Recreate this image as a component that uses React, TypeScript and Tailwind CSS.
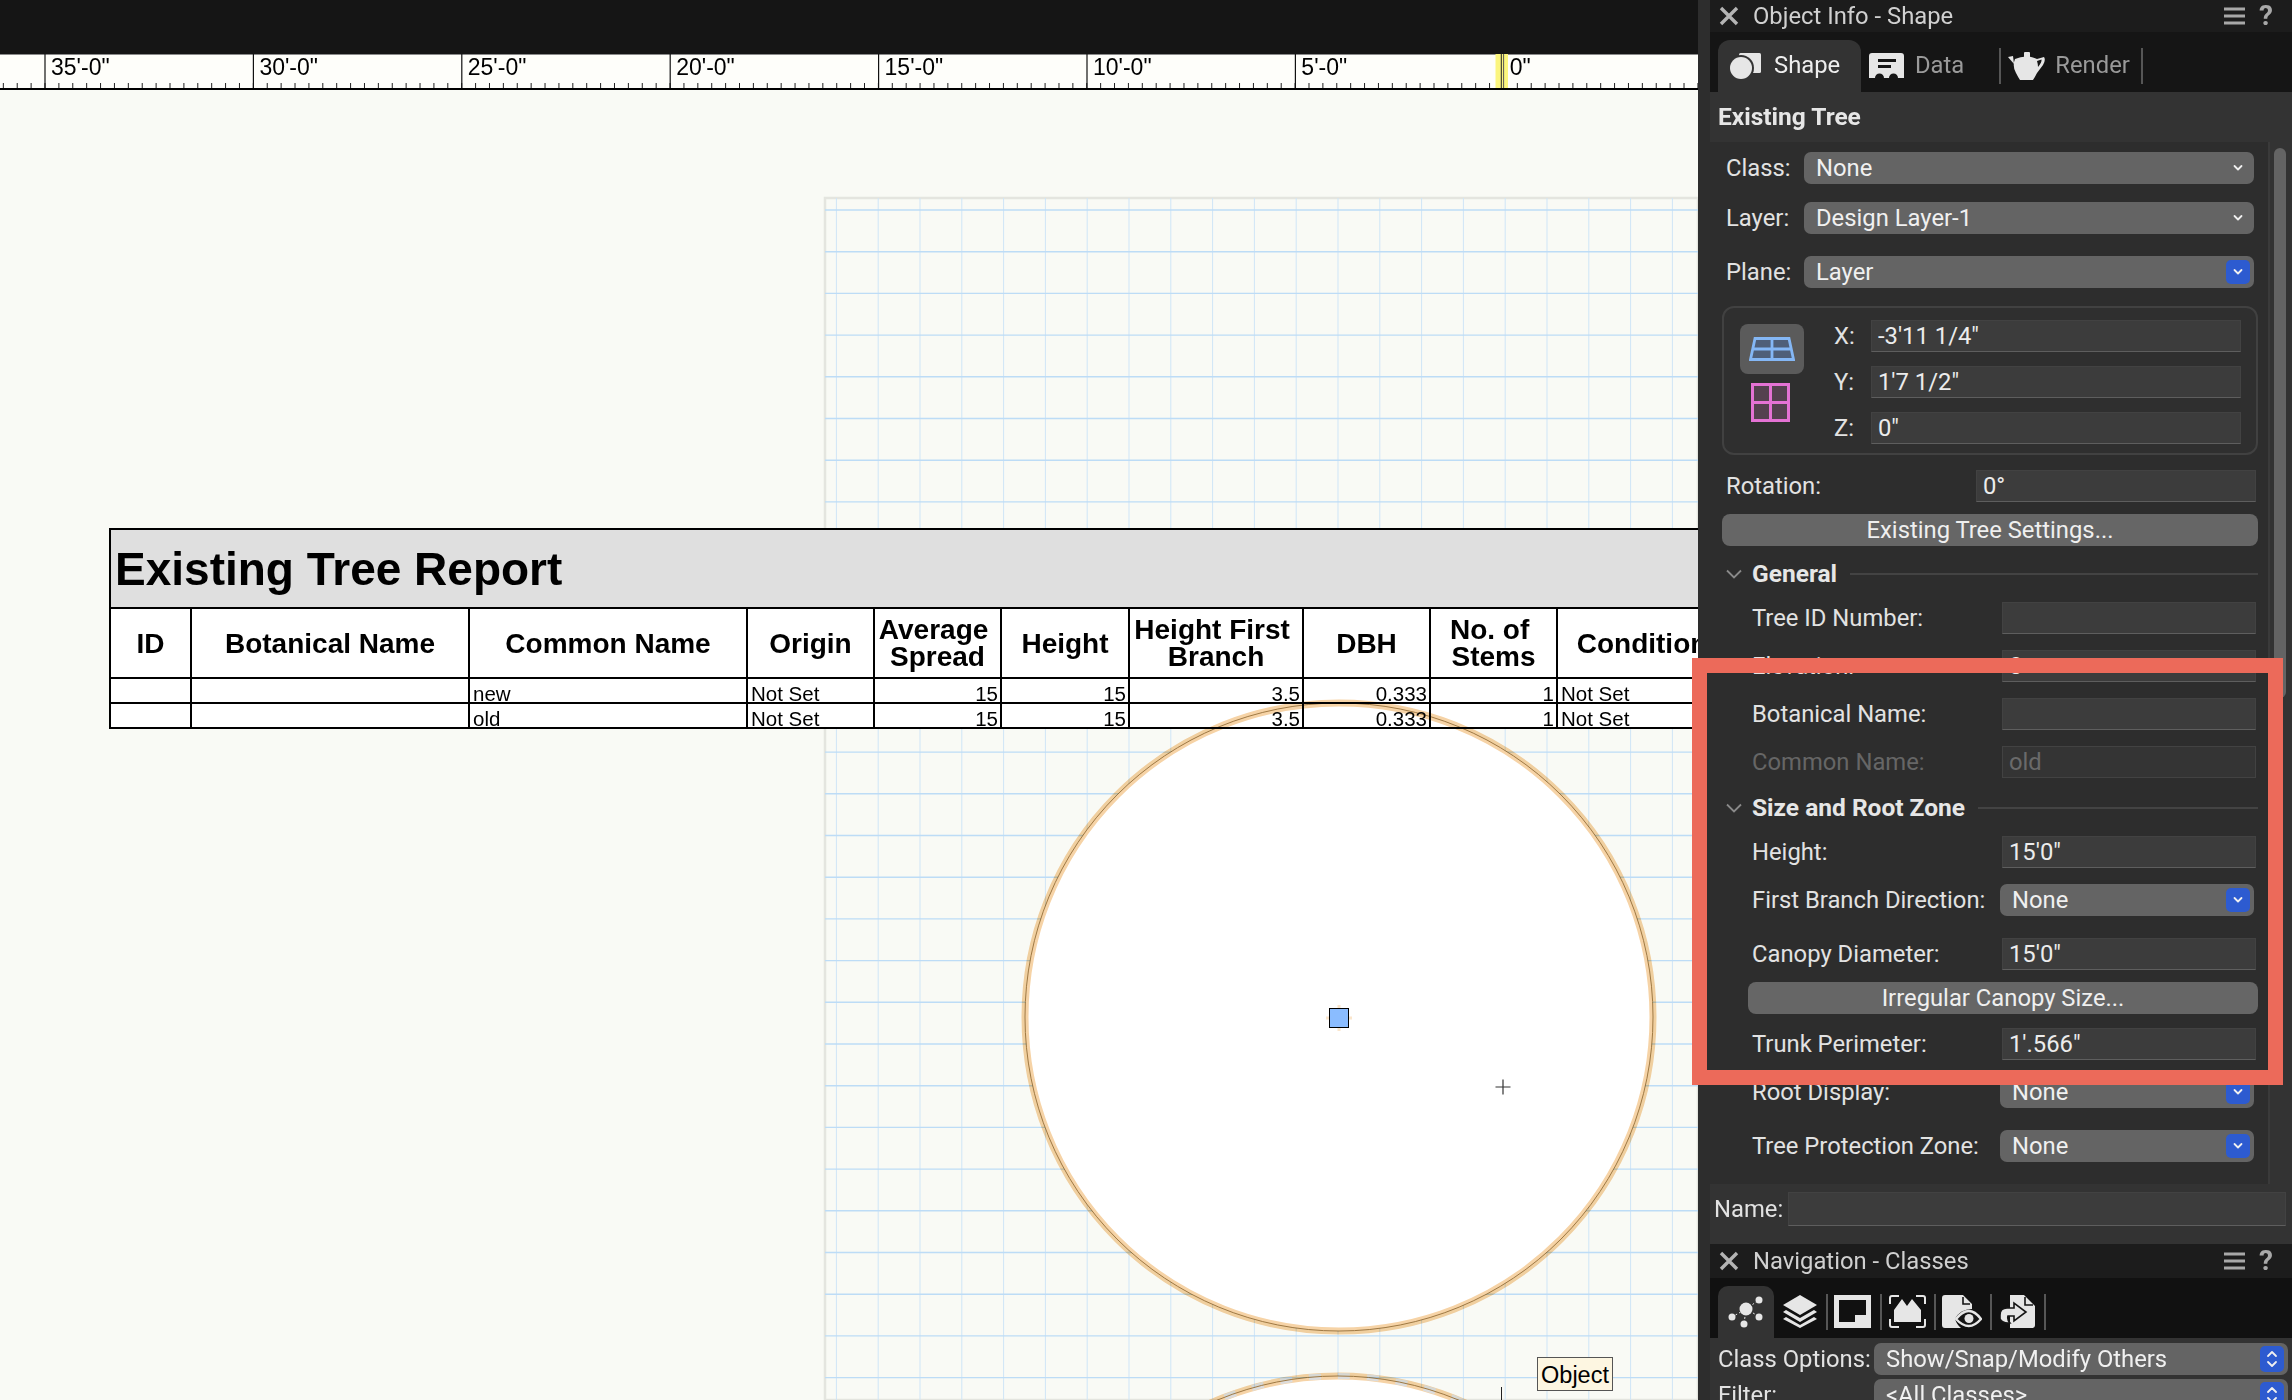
import React from "react";

const ICON = "#e6e6e6";

function Chevron({ className = "" }: { className?: string }) {
  return (
    <svg width="10" height="8" viewBox="0 0 10 8" className={className}>
      <path d="M1.5 2 L5 5.5 L8.5 2" fill="none" stroke="#f0f0f0" strokeWidth="1.8" strokeLinecap="round" strokeLinejoin="round" />
    </svg>
  );
}

function BlueChevron() {
  return (
    <div className="absolute right-[4px] top-[4px] w-[24px] h-[24px] rounded-[5px] bg-[#2d5bd0] flex items-center justify-center">
      <Chevron />
    </div>
  );
}

function Select({ value, blue = false, className = "" }: { value: string; blue?: boolean; className?: string }) {
  return (
    <div className={`relative h-[32px] rounded-[7px] bg-[#646464] flex items-center pl-[12px] text-[#f0f0f0] ${className}`}>
      <span className="pt-[1px]">{value}</span>
      {blue ? <BlueChevron /> : <Chevron className="absolute right-[11px] top-[12px]" />}
    </div>
  );
}

function Input({ value = "", disabled = false, className = "" }: { value?: string; disabled?: boolean; className?: string }) {
  return (
    <div
      className={`h-[32px] flex items-center pl-[6px] border border-[#424242] ${
        disabled ? "bg-[#343434] text-[#6a6a6a]" : "bg-[#3c3c3c] border-b-[#5e5e5e] text-[#ececec]"
      } ${className}`}
    >
      <span className="pt-[1px]">{value}</span>
    </div>
  );
}

function Button({ label, className = "" }: { label: string; className?: string }) {
  return (
    <div className={`h-[32px] rounded-[8px] bg-[#666666] flex items-center justify-center text-[#efefef] ${className}`}>
      <span className="pt-[1px]">{label}</span>
    </div>
  );
}

function FieldRow({ label, value, disabled = false, className = "" }: { label: string; value?: string; disabled?: boolean; className?: string }) {
  return (
    <div className={`flex items-center h-[32px] pl-[42px] pr-[12px] ${className}`}>
      <span className={`w-[250px] pt-[1px] ${disabled ? "text-[#666666]" : "text-[#e2e2e2]"}`}>{label}</span>
      <Input value={value} disabled={disabled} className="w-[254px]" />
    </div>
  );
}

function SelectRow({ label, className = "" }: { label: string; className?: string }) {
  return (
    <div className={`flex items-center h-[32px] pl-[42px] pr-[14px] ${className}`}>
      <span className="w-[248px] pt-[1px] text-[#e2e2e2]">{label}</span>
      <Select value="None" blue className="w-[254px]" />
    </div>
  );
}

function SectionHead({ label, className = "" }: { label: string; className?: string }) {
  return (
    <div className={`flex items-center h-[32px] pl-[16px] pr-[10px] ${className}`}>
      <svg width="16" height="10" viewBox="0 0 16 10" className="mr-[10px] shrink-0">
        <path d="M1 1.5 L8 8.5 L15 1.5" fill="none" stroke="#8a8a8a" strokeWidth="1.8" />
      </svg>
      <span className="pt-[1px] font-bold text-[24.5px] text-[#e6e6e6] whitespace-nowrap">{label}</span>
      <div className="flex-1 h-[2px] bg-[#434343] ml-[13px]" />
    </div>
  );
}

function CloseIcon() {
  return (
    <svg width="20" height="20" viewBox="0 0 20 20">
      <path d="M2 2 L18 18 M18 2 L2 18" stroke="#b4b4b4" strokeWidth="3.4" />
    </svg>
  );
}

function MenuHelp() {
  return (
    <div className="flex items-center ml-auto">
      <svg width="21" height="18" viewBox="0 0 21 18">
        <path d="M0 2 H21 M0 9 H21 M0 16 H21" stroke="#a8a8a8" strokeWidth="3" />
      </svg>
      <span className="ml-[14px] mr-[19px] w-[14px] font-bold text-[#a8a8a8] text-[28px] leading-none">?</span>
    </div>
  );
}

function ShapeIcon() {
  return (
    <svg width="32" height="27" viewBox="0 0 32 27">
      <rect x="9" y="0" width="22" height="20" rx="1.5" fill={ICON} />
      <circle cx="11" cy="15" r="13" fill="#333333" />
      <circle cx="11" cy="15" r="11" fill={ICON} />
    </svg>
  );
}

function DataIcon() {
  return (
    <svg width="35" height="26" viewBox="0 0 35 26">
      <path d="M3 0 H32 a3 3 0 0 1 3 3 V25 H29 a4.5 4.5 0 0 0 -9 0 H15 a4.5 4.5 0 0 0 -9 0 H0 V3 a3 3 0 0 1 3 -3 Z" fill={ICON} />
      <rect x="9" y="6" width="18" height="3" fill="#151515" />
      <rect x="9" y="12" width="13" height="3" fill="#151515" />
    </svg>
  );
}

function TeapotIcon() {
  return (
    <svg width="37" height="29" viewBox="0 0 37 29">
      <path d="M0 5 L5 4 L6 12 Z" fill={ICON} />
      <rect x="16" y="0" width="6" height="6" rx="1" fill={ICON} />
      <path d="M7 7 Q18 2 29 7 L36 5 Q38 8 35 13 L29 21 Q27 25 25 28 H12 Q10 25 8 21 Q4 14 7 7 Z" fill={ICON} />
      <path d="M29 9 L33.5 7.5 Q34 10 30 15 Q30 12 29 9 Z" fill="#151515" />
    </svg>
  );
}

function Sep({ className = "" }: { className?: string }) {
  return <div className={`w-[2px] bg-[#565656] ${className}`} />;
}

function NavIcons() {
  return (
    <>
      <div className="w-[56px] h-[52px] mt-[8px] bg-[#333333] rounded-t-[10px] flex items-start justify-center pt-[9px]">
        <svg width="36" height="33" viewBox="0 0 36 33">
          <path d="M4 22 L18 14 L31 5 M18 14 L32 22 M18 14 L16 29" stroke={ICON} strokeWidth="1" strokeDasharray="2 2" />
          <circle cx="18" cy="14" r="6.5" fill={ICON} />
          <circle cx="31" cy="5" r="3.5" fill={ICON} />
          <circle cx="4" cy="22" r="3.5" fill={ICON} />
          <circle cx="31" cy="22" r="3.5" fill={ICON} />
          <circle cx="16" cy="29" r="3.5" fill={ICON} />
        </svg>
      </div>
      <svg width="34" height="33" viewBox="0 0 34 33" className="ml-[9px] mt-[17px]">
        <path d="M17 0 L34 10 L17 20 L0 10 Z" fill={ICON} />
        <path d="M3 15 L17 23 L31 15 L34 17 L17 27 L0 17 Z" fill={ICON} />
        <path d="M3 22 L17 30 L31 22 L34 24 L17 33 L0 24 Z" fill={ICON} />
      </svg>
      <Sep className="ml-[9px] mt-[16px] h-[36px]" />
      <svg width="37" height="33" viewBox="0 0 37 33" className="ml-[6px] mt-[17px]">
        <path d="M0 0 H37 V33 H0 Z M5 5 V27 H21 V20 H32 V5 Z" fill={ICON} fillRule="evenodd" />
      </svg>
      <Sep className="ml-[9px] mt-[16px] h-[36px]" />
      <svg width="37" height="33" viewBox="0 0 37 33" className="ml-[7px] mt-[17px]">
        <path d="M10 1 H3 Q1 1 1 3 V9 M27 1 H34 Q36 1 36 3 V9 M1 24 V30 Q1 32 3 32 H10 M36 24 V30 Q36 32 34 32 H27" fill="none" stroke={ICON} strokeWidth="2" />
        <path d="M5 27 V15 L13 4 L18 11 L23 4 L32 15 V27 Z" fill={ICON} />
      </svg>
      <Sep className="ml-[8px] mt-[16px] h-[36px]" />
      <svg width="40" height="33" viewBox="0 0 40 33" className="ml-[6px] mt-[17px]">
        <path d="M3 0 H21 L30 9 V14 Q18 14 13 24 Q15 30 19 33 H3 Q0 33 0 30 V3 Q0 0 3 0 Z" fill={ICON} />
        <path d="M21 2 V9 H28" fill="none" stroke="#151515" strokeWidth="1.6" />
        <path d="M14 24 Q27 8 39 24 Q27 38 14 24 Z" fill="#151515" stroke={ICON} strokeWidth="2.4" />
        <circle cx="27" cy="23.5" r="4.5" fill={ICON} />
      </svg>
      <Sep className="ml-[8px] mt-[16px] h-[36px]" />
      <svg width="36" height="33" viewBox="0 0 36 33" className="ml-[8px] mt-[17px]">
        <path d="M10 0 H24 L35 11 V30 Q35 33 32 33 H10 V0 Z" fill={ICON} />
        <path d="M25 2 V10 H33" fill="none" stroke="#151515" strokeWidth="1.6" />
        <path d="M0 20 Q0 13 7 13 H14 V8 L26 17 L14 26 V21 H8 Q7 25 10 28 Q3 29 0 24 Z" fill={ICON} stroke="#151515" strokeWidth="1.6" />
      </svg>
      <Sep className="ml-[8px] mt-[16px] h-[36px]" />
    </>
  );
}

function UpDown() {
  return (
    <div className="absolute right-[4px] top-[3px] w-[24px] h-[26px] rounded-[5px] bg-[#2d5bd0] flex items-center justify-center">
      <svg width="12" height="18" viewBox="0 0 12 18">
        <path d="M2 6 L6 2 L10 6 M2 12 L6 16 L10 12" fill="none" stroke="#f0f0f0" strokeWidth="1.8" strokeLinecap="round" strokeLinejoin="round" />
      </svg>
    </div>
  );
}

const RULER_LABELS = ["35'-0\"", "30'-0\"", "25'-0\"", "20'-0\"", "15'-0\"", "10'-0\"", "5'-0\"", "0\""];

function Ruler() {
  const minor: number[] = [];
  for (let x = 45 - 3 * 13.89; x < 1700; x += 13.89) minor.push(x);
  const major = RULER_LABELS.map((_, i) => 45 + i * 208.4);
  return (
    <div className="relative h-[36px] bg-[#fefefa] border-t border-[#8a8a8a]">
      <svg className="absolute left-0 top-[-1px]" width="1698" height="36" viewBox="0 0 1698 36">
        {minor.map((x) => (
          <line key={x} x1={x} x2={x} y1="29" y2="35" stroke="#222" strokeWidth="1" />
        ))}
        {major.map((x) => (
          <line key={x} x1={x} x2={x} y1="0" y2="35" stroke="#111" strokeWidth="1.2" />
        ))}
        <rect x="1495.5" y="0" width="12.5" height="35" fill="#fbf57d" />
        <line x1="1501.3" x2="1501.3" y1="0" y2="35" stroke="#222" strokeWidth="1" />
        <line x1="1503.6" x2="1503.6" y1="0" y2="35" stroke="#555" strokeWidth="1" />
        <line x1="0" x2="1698" y1="35" y2="35" stroke="#000" strokeWidth="2" />
      </svg>
      <div className="relative flex ml-[44px] font-['Liberation_Sans',Arial,sans-serif] text-[23px] leading-[24px] text-black">
        {RULER_LABELS.map((l) => (
          <div key={l} className="w-[208.4px] shrink-0 pl-[7px]">
            {l}
          </div>
        ))}
      </div>
    </div>
  );
}

function Drawing() {
  const vs: number[] = [];
  for (let x = 836.4; x < 1700; x += 41.8) vs.push(x);
  const hs: number[] = [];
  for (let y = 210; y < 1400; y += 41.7) hs.push(y);
  return (
    <svg className="absolute left-0 top-0" width="1698" height="1310" viewBox="0 90 1698 1310">
      <rect x="825" y="198" width="873" height="1202" fill="none" stroke="#e4e5df" strokeWidth="2.5" />
      {vs.map((x) => (
        <line key={x} x1={x} x2={x} y1="198" y2="1400" stroke="#cfe5f7" strokeWidth="1" />
      ))}
      {hs.map((y) => (
        <line key={y} x1="825" x2="1698" y1={y} y2={y} stroke="#bddcf6" strokeWidth="1.4" />
      ))}
      <circle cx="1339" cy="1017" r="314" fill="#ffffff" />
      <circle cx="1338" cy="1690" r="314" fill="#ffffff" />
    </svg>
  );
}

function Arcs() {
  return (
    <svg className="absolute left-0 top-0 mix-blend-multiply" width="1698" height="1310" viewBox="0 90 1698 1310">
      <circle cx="1339" cy="1017" r="314" fill="none" stroke="#f6d3a6" strokeWidth="7" />
      <circle cx="1339" cy="1017" r="314" fill="none" stroke="#a07a45" strokeWidth="1" />
      <circle cx="1338" cy="1690" r="314" fill="none" stroke="#f6d3a6" strokeWidth="7" />
      <circle cx="1338" cy="1690" r="314" fill="none" stroke="#dcdcdc" strokeWidth="6" strokeDasharray="12 17" />
      <circle cx="1338" cy="1690" r="314" fill="none" stroke="#a07a45" strokeWidth="1" />
      <path d="M1339 1005 V1031 M1326 1018 H1352" stroke="#fbe6cc" strokeWidth="3" />
    </svg>
  );
}

const COLS = [81, 278, 278, 127, 127, 128, 174, 127, 127, 170];

function HeadCell({ children }: { children: React.ReactNode }) {
  return <td className="border-2 border-black text-center align-middle font-bold text-[28px] leading-[27px] p-0">{children}</td>;
}

function DataCell({ children, right = false }: { children?: React.ReactNode; right?: boolean }) {
  return (
    <td className={`border-2 border-black h-[25px] p-0 align-bottom whitespace-nowrap ${right ? "text-right pr-[2px]" : "text-left pl-[3px]"}`}>
      <div className="h-[23px] leading-[29px] text-[20.5px]">{children}</div>
    </td>
  );
}

function Report() {
  const rows = ["new", "old"];
  return (
    <table className="absolute left-[109px] top-[438px] w-[1617px] table-fixed border-collapse bg-white font-['Liberation_Sans',Arial,sans-serif] text-black">
      <colgroup>
        {COLS.map((w, i) => (
          <col key={i} style={{ width: w }} />
        ))}
      </colgroup>
      <tbody>
        <tr className="h-[79px] bg-[#dfdfdf]">
          <td colSpan={10} className="border-2 border-black p-0 pl-[4px] align-middle font-bold text-[46px] leading-none">
            Existing Tree Report
          </td>
        </tr>
        <tr className="h-[70px]">
          <HeadCell>ID</HeadCell>
          <HeadCell>Botanical Name</HeadCell>
          <HeadCell>Common Name</HeadCell>
          <HeadCell>Origin</HeadCell>
          <HeadCell>
            Average{"\u00A0"}
            <br />
            Spread
          </HeadCell>
          <HeadCell>Height</HeadCell>
          <HeadCell>
            Height First{"\u00A0"}
            <br />
            Branch
          </HeadCell>
          <HeadCell>DBH</HeadCell>
          <HeadCell>
            No. of{"\u00A0"}
            <br />
            Stems
          </HeadCell>
          <HeadCell>Condition</HeadCell>
        </tr>
        {rows.map((r) => (
          <tr key={r} className="h-[25px]">
            <DataCell />
            <DataCell />
            <DataCell>{r}</DataCell>
            <DataCell>Not Set</DataCell>
            <DataCell right>15</DataCell>
            <DataCell right>15</DataCell>
            <DataCell right>3.5</DataCell>
            <DataCell right>0.333</DataCell>
            <DataCell right>1</DataCell>
            <DataCell>Not Set</DataCell>
          </tr>
        ))}
      </tbody>
    </table>
  );
}

export default function App() {
  return (
    <div className="relative w-[2292px] h-[1400px] overflow-hidden flex bg-[#2d2d2d] font-['Roboto','Liberation_Sans',sans-serif] text-[23.8px] leading-none">
      {/* Canvas side */}
      <div className="w-[1698px] h-full flex flex-col shrink-0">
        <div className="h-[54px] bg-[#151515] shrink-0" />
        <Ruler />
        <div className="relative flex-1 bg-[#f9faf5] overflow-hidden">
          <Drawing />
          <Report />
          <Arcs />
          <div className="absolute left-[1329px] top-[918px] w-[20px] h-[20px] bg-[#8abcff] border border-black" />
          <svg className="absolute left-[1495px] top-[989px]" width="16" height="16" viewBox="0 0 16 16">
            <path d="M0.5 8 H15.5 M8 0.5 V15.5" stroke="#333" strokeWidth="1.2" />
          </svg>
          <div className="absolute left-[1537px] top-[1267px] w-[76px] h-[34px] bg-[#fdf6e1] border border-[#555555] flex items-center justify-center font-['Liberation_Sans',Arial,sans-serif] text-[23.5px] text-black">
            <span className="pt-[3px]">Object</span>
          </div>
          <div className="absolute left-[1501px] top-[1297px] w-[1px] h-[14px] bg-[#222222]" />
        </div>
      </div>

      {/* Palette */}
      <div className="w-[594px] h-full flex flex-col pl-[12px] bg-[#2d2d2d]">
        {/* Object Info title */}
        <div className="h-[32px] bg-[#1c1c1c] flex items-center pl-[9px] shrink-0">
          <CloseIcon />
          <span className="ml-[14px] text-[#d0d0d0] pt-[1px]">Object Info - Shape</span>
          <MenuHelp />
        </div>
        {/* Tabs */}
        <div className="h-[60px] bg-[#151515] flex items-start pl-[8px] shrink-0">
          <div className="w-[143px] h-[52px] mt-[8px] bg-[#333333] rounded-t-[12px] flex items-center pl-[12px]">
            <ShapeIcon />
            <span className="ml-[12px] text-[#eeeeee]">Shape</span>
          </div>
          <div className="flex items-center h-[52px] mt-[8px] pl-[8px]">
            <DataIcon />
            <span className="ml-[11px] text-[#9a9a9a]">Data</span>
          </div>
          <Sep className="ml-[35px] mt-[16px] h-[36px]" />
          <div className="flex items-center h-[52px] mt-[8px] pl-[7px]">
            <TeapotIcon />
            <span className="ml-[10px] text-[#9a9a9a]">Render</span>
          </div>
          <Sep className="ml-[11px] mt-[16px] h-[36px]" />
        </div>
        {/* Heading */}
        <div className="h-[50px] bg-[#333333] flex items-center pl-[8px] font-bold text-[24.5px] text-[#e6e6e6] shrink-0">
          <span className="pt-[1px]">Existing Tree</span>
        </div>
        {/* Scroll area */}
        <div className="relative flex h-[1042px] shrink-0 bg-[#333333]">
          <div className="w-[560px] h-full bg-[#2d2d2d] border-r-2 border-[#3a3a3a] pt-[10px] text-[#e2e2e2]">
            <div className="flex items-center pl-[16px] pr-[14px]">
              <span className="w-[78px] pt-[1px]">Class:</span>
              <Select value="None" className="flex-1" />
            </div>
            <div className="flex items-center pl-[16px] pr-[14px] mt-[18px]">
              <span className="w-[78px] pt-[1px]">Layer:</span>
              <Select value="Design Layer-1" className="flex-1" />
            </div>
            <div className="flex items-center pl-[16px] pr-[14px] mt-[22px]">
              <span className="w-[78px] pt-[1px]">Plane:</span>
              <Select value="Layer" blue className="flex-1" />
            </div>

            <div className="mt-[18px] ml-[12px] w-[536px] h-[149px] rounded-[12px] border-2 border-[#414141] bg-[#2f2f2f] flex pl-[16px] pt-[12px]">
              <div className="w-[64px] flex flex-col items-center mr-[30px] shrink-0">
                <div className="w-[64px] h-[50px] mt-[4px] rounded-[8px] bg-[#5b5b5b] flex items-center justify-center">
                  <svg width="46" height="24" viewBox="0 0 46 24">
                    <path d="M6 1.5 H40 L44.5 22.5 H1.5 Z M23 1.5 V22.5 M4 12 H42" fill="#4f5f78" stroke="#84b7f5" strokeWidth="2.8" />
                  </svg>
                </div>
                <svg width="39" height="39" viewBox="0 0 39 39" className="mt-[9px] mr-[4px]">
                  <path d="M1.5 1.5 H37.5 V37.5 H1.5 Z M19.5 1.5 V37.5 M1.5 19.5 H37.5" fill="#54414f" stroke="#e472d4" strokeWidth="3" />
                </svg>
              </div>
              <div className="flex flex-col gap-[14px]">
                {[
                  ["X:", "-3'11 1/4\""],
                  ["Y:", "1'7 1/2\""],
                  ["Z:", "0\""],
                ].map(([l, v]) => (
                  <div key={l} className="flex items-center">
                    <span className="w-[37px] pt-[1px]">{l}</span>
                    <Input value={v} className="w-[370px]" />
                  </div>
                ))}
              </div>
            </div>

            <div className="flex items-center pl-[16px] mt-[15px]">
              <span className="w-[250px] pt-[1px]">Rotation:</span>
              <Input value="0°" className="w-[280px]" />
            </div>
            <div className="px-[12px] mt-[12px]">
              <Button label="Existing Tree Settings..." className="w-[536px]" />
            </div>

            <SectionHead label="General" className="mt-[12px]" />
            <FieldRow label="Tree ID Number:" className="mt-[12px]" />
            <FieldRow label="Elevation:" value="0" className="mt-[16px]" />
            <FieldRow label="Botanical Name:" className="mt-[16px]" />
            <FieldRow label="Common Name:" value="old" disabled className="mt-[16px]" />
            <SectionHead label="Size and Root Zone" className="mt-[14px]" />
            <FieldRow label="Height:" value="15'0&quot;" className="mt-[12px]" />
            <SelectRow label="First Branch Direction:" className="mt-[16px]" />
            <FieldRow label="Canopy Diameter:" value="15'0&quot;" className="mt-[22px]" />
            <div className="pl-[38px] mt-[12px]">
              <Button label="Irregular Canopy Size..." className="w-[510px]" />
            </div>
            <FieldRow label="Trunk Perimeter:" value="1'.566&quot;" className="mt-[14px]" />
            <SelectRow label="Root Display:" className="mt-[16px]" />
            <SelectRow label="Tree Protection Zone:" className="mt-[22px]" />
          </div>
          <div className="absolute left-[564px] top-[6px] w-[12px] h-[550px] rounded-full bg-[#646464]" />
        </div>
        {/* Name */}
        <div className="h-[60px] bg-[#333333] flex items-start pl-[4px] pt-[8px] text-[#e2e2e2] shrink-0">
          <div className="h-[34px] flex items-center w-[74px]">
            <span className="pt-[1px]">Name:</span>
          </div>
          <Input className="w-[498px] !h-[34px]" />
        </div>
        {/* Navigation title */}
        <div className="h-[34px] bg-[#1c1c1c] flex items-center pl-[9px] shrink-0">
          <CloseIcon />
          <span className="ml-[14px] text-[#d0d0d0] pt-[1px]">Navigation - Classes</span>
          <MenuHelp />
        </div>
        {/* Navigation tabs */}
        <div className="h-[60px] bg-[#111111] flex items-start pl-[8px] shrink-0">
          <NavIcons />
        </div>
        {/* Options */}
        <div className="flex-1 bg-[#333333] pl-[8px] pt-[5px] text-[#e2e2e2]">
          <div className="flex items-center">
            <span className="w-[156px] pt-[1px]">Class Options:</span>
            <div className="relative w-[414px] h-[32px] rounded-[7px] bg-[#646464] flex items-center pl-[12px] text-[#f0f0f0]">
              <span className="pt-[1px]">Show/Snap/Modify Others</span>
              <UpDown />
            </div>
          </div>
          <div className="flex items-center mt-[4px]">
            <span className="w-[156px] pt-[1px]">Filter:</span>
            <div className="relative w-[414px] h-[32px] rounded-[7px] bg-[#646464] flex items-center pl-[12px] text-[#f0f0f0]">
              <span className="pt-[1px]">&lt;All Classes&gt;</span>
              <UpDown />
            </div>
          </div>
        </div>
      </div>

      {/* Annotation highlight */}
      <div className="absolute left-[1692px] top-[658px] w-[591px] h-[427px] border-x-[15px] border-y-[15px] border-[#ec6a5a]" />
    </div>
  );
}
